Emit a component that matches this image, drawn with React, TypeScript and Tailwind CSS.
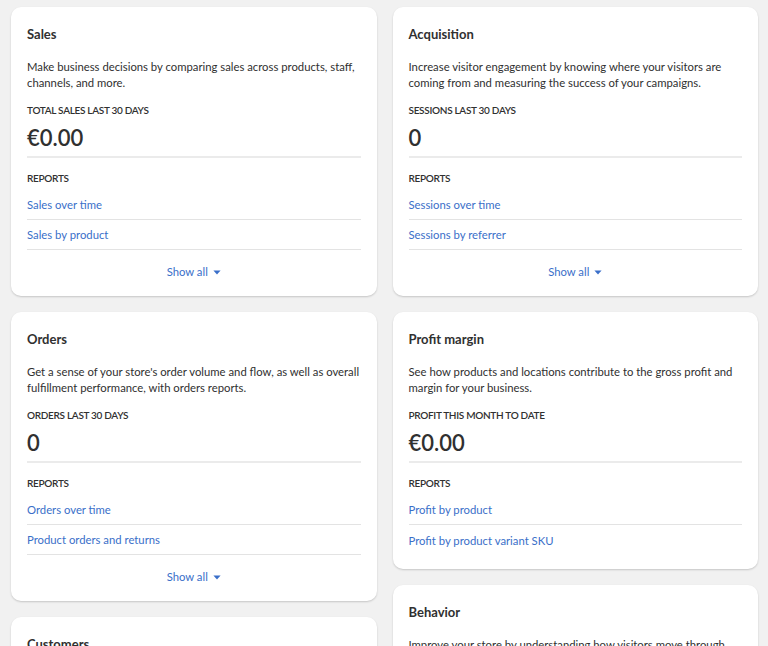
import { ReactNode } from "react";

type Card = {
  title: string;
  description: string;
  metricLabel?: string;
  metricValue?: string;
  reports?: string[];
  showAll?: boolean;
};

const LEFT: Card[] = [
  {
    title: "Sales",
    description:
      "Make business decisions by comparing sales across products, staff, channels, and more.",
    metricLabel: "Total sales last 30 days",
    metricValue: "€0.00",
    reports: ["Sales over time", "Sales by product"],
    showAll: true,
  },
  {
    title: "Orders",
    description:
      "Get a sense of your store's order volume and flow, as well as overall fulfillment performance, with orders reports.",
    metricLabel: "Orders last 30 days",
    metricValue: "0",
    reports: ["Orders over time", "Product orders and returns"],
    showAll: true,
  },
  {
    title: "Customers",
    description:
      "Gain insights into who your customers are and how they interact with your business.",
    metricLabel: "Customers last 30 days",
    metricValue: "0",
    reports: ["Customers over time", "First-time vs returning customer sales"],
    showAll: true,
  },
];

const RIGHT: Card[] = [
  {
    title: "Acquisition",
    description:
      "Increase visitor engagement by knowing where your visitors are coming from and measuring the success of your campaigns.",
    metricLabel: "Sessions last 30 days",
    metricValue: "0",
    reports: ["Sessions over time", "Sessions by referrer"],
    showAll: true,
  },
  {
    title: "Profit margin",
    description:
      "See how products and locations contribute to the gross profit and margin for your business.",
    metricLabel: "Profit this month to date",
    metricValue: "€0.00",
    reports: ["Profit by product", "Profit by product variant SKU"],
  },
  {
    title: "Behavior",
    description:
      "Improve your store by understanding how visitors move through your site.",
    metricLabel: "Online store conversion rate last 30 days",
    metricValue: "0%",
    reports: ["Online store conversion over time", "Top online store searches"],
    showAll: true,
  },
];

function CaretDown() {
  return (
    <svg viewBox="0 0 10 6" className="ml-[5px] h-[5px] w-[8px]" fill="currentColor" aria-hidden="true">
      <path d="M0.5 0.5h9L5 5.5z" />
    </svg>
  );
}

function ReportCard({ card }: { card: Card }) {
  const reports = card.reports ?? [];
  return (
    <section
      className={`rounded-[10px] bg-white px-4 pt-4 shadow-[0_1px_2px_rgba(0,0,0,0.18)] ${
        card.showAll ? "pb-4" : "pb-[14px]"
      }`}
    >
      <h2 className="text-[13px] leading-[22px] font-bold text-[#303030]">{card.title}</h2>
      <p className="mt-[14px] text-[11.3px] leading-4 text-[#303030]">{card.description}</p>
      {card.metricLabel && (
        <>
          <p className="mt-3 text-[10px] leading-[14px] font-semibold uppercase tracking-[-0.3px] text-[#303030]">
            {card.metricLabel}
          </p>
          <p className="mt-[7px] text-[22px] leading-7 font-semibold text-[#303030]">{card.metricValue}</p>
          <div className="mt-1 h-[2px] bg-[#ebebeb]" />
        </>
      )}
      <p className="mt-[13px] text-[10px] leading-[14px] font-semibold uppercase tracking-[-0.3px] text-[#303030]">
        Reports
      </p>
      <ul className="mt-[5px]">
        {reports.map((r, i) => {
          const last = i === reports.length - 1;
          return (
            <li
              key={r}
              className={`flex h-[30px] items-center pt-[2px] text-[11.3px] text-[#3a6fc9] ${
                last && !card.showAll ? "" : "border-b border-[#e3e3e3]"
              }`}
            >
              {r}
            </li>
          );
        })}
      </ul>
      {card.showAll && (
        <div className="flex items-center justify-center pt-[14px] text-[11.3px] leading-4 text-[#3a6fc9]">
          Show all
          <CaretDown />
        </div>
      )}
    </section>
  );
}

function Column({ children }: { children: ReactNode }) {
  return <div className="flex flex-col gap-4">{children}</div>;
}

export default function App() {
  return (
    <div
      className="min-h-screen bg-[#f1f1f1] pt-[7px] pl-[11px] pr-[10px]"
      style={{ fontFamily: 'Lato, "Open Sans", sans-serif' }}
    >
      <div className="grid grid-cols-2 items-start gap-4">
        <Column>
          {LEFT.map((c) => (
            <ReportCard key={c.title} card={c} />
          ))}
        </Column>
        <Column>
          {RIGHT.map((c) => (
            <ReportCard key={c.title} card={c} />
          ))}
        </Column>
      </div>
    </div>
  );
}
